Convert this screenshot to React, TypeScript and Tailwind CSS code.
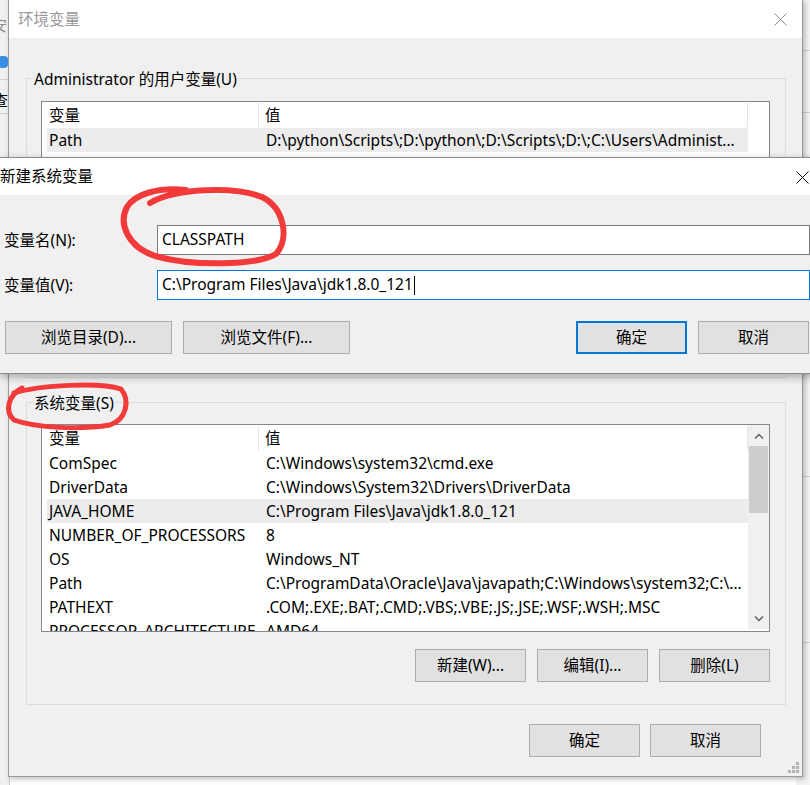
import React from 'react';

const font = "font-['Noto_Sans','Noto_Sans_CJK_SC',sans-serif]";

type Row = { name: string; value: string; selected?: boolean };

const systemRows: Row[] = [
  { name: 'ComSpec', value: 'C:\\Windows\\system32\\cmd.exe' },
  { name: 'DriverData', value: 'C:\\Windows\\System32\\Drivers\\DriverData' },
  { name: 'JAVA_HOME', value: 'C:\\Program Files\\Java\\jdk1.8.0_121', selected: true },
  { name: 'NUMBER_OF_PROCESSORS', value: '8' },
  { name: 'OS', value: 'Windows_NT' },
  { name: 'Path', value: 'C:\\ProgramData\\Oracle\\Java\\javapath;C:\\Windows\\system32;C:\\...' },
  { name: 'PATHEXT', value: '.COM;.EXE;.BAT;.CMD;.VBS;.VBE;.JS;.JSE;.WSF;.WSH;.MSC' },
  { name: 'PROCESSOR_ARCHITECTURE', value: 'AMD64' },
];

const userRows: Row[] = [
  { name: 'Path', value: 'D:\\python\\Scripts\\;D:\\python\\;D:\\Scripts\\;D:\\;C:\\Users\\Administ...', selected: true },
  { name: 'TEMP', value: '%USERPROFILE%\\AppData\\Local\\Temp' },
  { name: 'TMP', value: '%USERPROFILE%\\AppData\\Local\\Temp' },
];

function CloseX({ color }: { color: string }) {
  return (
    <svg width="13" height="13" viewBox="0 0 13 13">
      <path d="M0.5 0.5 L12.5 12.5 M12.5 0.5 L0.5 12.5" stroke={color} strokeWidth="1" fill="none" />
    </svg>
  );
}

function WinButton({ label, width, primary }: { label: string; width: string; primary?: boolean }) {
  return (
    <button
      className={`${width} h-[33px] bg-[#e1e1e1] text-[15.5px] text-black flex items-center justify-center pt-[1px] ${
        primary ? 'border-2 border-[#0078d7]' : 'border border-[#adadad]'
      }`}
    >
      {label}
    </button>
  );
}

function Chevron({ up }: { up?: boolean }) {
  return (
    <svg width="10" height="6" viewBox="0 0 10 6">
      <path
        d={up ? 'M1 5.5 L5 1.5 L9 5.5' : 'M1 0.5 L5 4.5 L9 0.5'}
        stroke="#606060"
        strokeWidth="1.5"
        fill="none"
      />
    </svg>
  );
}

function VarList({ rows, height, scroll }: { rows: Row[]; height: string; scroll?: boolean }) {
  return (
    <div className={`${height} border border-[#828790] bg-white flex overflow-hidden`}>
      <div className="flex-1 flex flex-col pl-[5px] overflow-hidden">
        <div className="h-[26px] flex items-stretch shrink-0">
          <div className="w-[212px] pl-[2px] pt-[1px] flex items-center border-r border-[#e5e5e5] my-[1px]">变量</div>
          <div className="flex-1 pl-[6px] pt-[1px] flex items-center border-r border-[#e5e5e5] my-[1px]">值</div>
        </div>
        {rows.map((r) => (
          <div
            key={r.name}
            className={`h-[24px] shrink-0 flex items-center pt-[2px] whitespace-nowrap ${r.selected ? 'bg-[#ececec]' : ''}`}
          >
            <div className="w-[212px] pl-[2px] overflow-hidden">{r.name}</div>
            <div className="flex-1 pl-[7px] overflow-hidden">{r.value}</div>
          </div>
        ))}
      </div>
      {scroll ? (
        <div className="w-[21px] bg-[#f0f0f0] flex flex-col mb-[2px]">
          <div className="h-[21px] flex items-center justify-center">
            <Chevron up />
          </div>
          <div className="flex-1 px-[1px]">
            <div className="h-[67px] bg-[#cdcdcd]" />
          </div>
          <div className="h-[21px] flex items-center justify-center">
            <Chevron />
          </div>
        </div>
      ) : (
        <div className="w-[21px]" />
      )}
    </div>
  );
}

function GroupBox({ label, children, className }: { label: string; children: React.ReactNode; className: string }) {
  return (
    <div className="flex flex-col">
      <div className="h-[20px] flex">
        <div className="w-[7px] h-[10px] self-end border-l border-t border-[#dcdcdc]" />
        <span className="px-[1px] leading-[20px] pt-[1px]">{label}</span>
        <div className="flex-1 h-[10px] self-end border-r border-t border-[#dcdcdc]" />
      </div>
      <div className={`border-x border-b border-[#dcdcdc] pl-[14px] pr-[15px] ${className}`}>{children}</div>
    </div>
  );
}

function Gripper() {
  return (
    <svg width="12" height="12" viewBox="0 0 12 12">
      {[
        [8, 0],
        [4, 4],
        [8, 4],
        [0, 8],
        [4, 8],
        [8, 8],
      ].map(([x, y]) => (
        <rect key={`${x}-${y}`} x={x} y={y} width="3" height="3" fill="#b4b4b4" />
      ))}
    </svg>
  );
}

export default function App() {
  return (
    <div className={`${font} relative w-[810px] h-[785px] overflow-hidden bg-white text-[15.5px] text-black`}>
      {/* window behind, left edge */}
      <div className="absolute left-[-60px] top-0 w-[70px] h-[785px] bg-[#f0f0f0] border-r border-[#c8c8c8]">
        <div className="absolute left-[52px] top-[14px] text-[#8a8a8a] text-[15px]">安</div>
        <div className="absolute left-[58px] top-[56px] w-[10px] h-[12px] bg-[#3a8ee6] rounded-sm" />
        <div className="absolute left-0 top-[79px] w-[70px] border-t border-[#d0d0d0]" />
        <div className="absolute left-[53px] top-[89px] text-[15px]">查</div>
        <div className="absolute left-0 top-[113px] w-[70px] border-t border-[#d0d0d0]" />
      </div>

      {/* window behind, right edge */}
      <div className="absolute left-[796px] top-0 w-[20px] h-[785px] bg-[#f3f3f3]">
        <div className="absolute left-0 top-[50px] w-[20px] border-t border-[#d0d0d0]" />
        <div className="absolute left-0 top-[112px] w-[20px] border-t border-[#d0d0d0]" />
        <div className="absolute left-0 top-[476px] w-[20px] border-t border-[#d0d0d0]" />
        <div className="absolute left-0 top-[642px] w-[20px] border-t border-[#d0d0d0]" />
      </div>

      {/* 环境变量 window */}
      <div className="absolute left-[8px] top-[-1px] w-[795px] h-[778px] bg-[#f0f0f0] border border-[#9a9a9a] shadow-[2px_2px_5px_rgba(0,0,0,0.25)] flex flex-col">
        <div className="h-[38px] bg-white flex items-center justify-between pl-[9px] pr-[15px] pt-[1px] shrink-0">
          <span className="text-[#999999]">环境变量</span>
          <CloseX color="#8a8a8a" />
        </div>
        <div className="flex-1 flex flex-col pl-[17px] pr-[16px]">
          <div className="mt-[30px]">
            <GroupBox label="Administrator 的用户变量(U)" className="pt-[13px] h-[290px]">
              <VarList rows={userRows} height="h-[208px]" />
              <div className="mt-[17px] flex justify-end gap-[11px]">
                <WinButton label="新建(N)..." width="w-[111px]" />
                <WinButton label="编辑(E)..." width="w-[111px]" />
                <WinButton label="删除(D)" width="w-[111px]" />
              </div>
            </GroupBox>
          </div>
          <div className="mt-[14px]">
            <GroupBox label="系统变量(S)" className="pt-[12px] pb-[22px]">
              <VarList rows={systemRows} height="h-[208px]" scroll />
              <div className="mt-[17px] flex justify-end gap-[11px]">
                <WinButton label="新建(W)..." width="w-[111px]" />
                <WinButton label="编辑(I)..." width="w-[111px]" />
                <WinButton label="删除(L)" width="w-[111px]" />
              </div>
            </GroupBox>
          </div>
          <div className="mt-[19px] flex justify-end gap-[10px] pr-[25px]">
            <WinButton label="确定" width="w-[111px]" />
            <WinButton label="取消" width="w-[111px]" />
          </div>
          <div className="flex-1 flex items-end justify-end pb-[2px] mr-[-14px]">
            <Gripper />
          </div>
        </div>
      </div>

      {/* 新建系统变量 dialog */}
      <div className="absolute left-0 top-[157px] w-[822px] h-[217px] bg-[#f0f0f0] border-y border-[#8c8c8c] shadow-[0_3px_8px_rgba(0,0,0,0.3)] flex flex-col">
        <div className="h-[37px] bg-white flex items-center justify-between pr-[13px] pt-[1px] shrink-0">
          <span>新建系统变量</span>
          <CloseX color="#000000" />
        </div>
        <div className="flex flex-col pr-[12px]">
          <div className="mt-[30px] flex items-center">
            <div className="w-[157px] pl-[4px] pt-[1px]">变量名(N):</div>
            <div className="flex-1 h-[30px] bg-white border border-[#7a7a7a] flex items-center pl-[4px]">
              CLASSPATH
            </div>
          </div>
          <div className="mt-[15px] flex items-center">
            <div className="w-[157px] pl-[4px] pt-[1px]">变量值(V):</div>
            <div className="flex-1 h-[30px] bg-white border border-[#0078d7] flex items-center pl-[4px]">
              <span>C:\Program Files\Java\jdk1.8.0_121</span>
              <span className="w-[1px] h-[19px] bg-black ml-[1px]" />
            </div>
          </div>
          <div className="mt-[21px] flex items-center pl-[5px]">
            <WinButton label="浏览目录(D)..." width="w-[167px]" />
            <div className="ml-[11px]">
              <WinButton label="浏览文件(F)..." width="w-[167px]" />
            </div>
            <div className="flex-1" />
            <WinButton label="确定" width="w-[111px]" primary />
            <div className="ml-[11px] mr-[1px]">
              <WinButton label="取消" width="w-[111px]" />
            </div>
          </div>
        </div>
      </div>

      {/* red hand-drawn marks */}
      <svg className="absolute left-0 top-0 pointer-events-none" width="810" height="785" viewBox="0 0 810 785">
        <path
          d="M150 203 C175 188 235 186 262 197 C284 208 290 238 276 254 C256 266 190 266 155 256 C128 247 118 224 127 207 C135 194 158 187 186 190"
          stroke="#f23a3a"
          strokeWidth="6"
          fill="none"
          strokeLinecap="round"
          strokeLinejoin="round"
        />
        <path
          d="M14 393 C40 385 100 382 121 389 C130 400 127 419 110 425 C80 430 36 428 14 420 C5 412 7 396 22 388"
          stroke="#f23a3a"
          strokeWidth="5"
          fill="none"
          strokeLinecap="round"
          strokeLinejoin="round"
        />
      </svg>
    </div>
  );
}
